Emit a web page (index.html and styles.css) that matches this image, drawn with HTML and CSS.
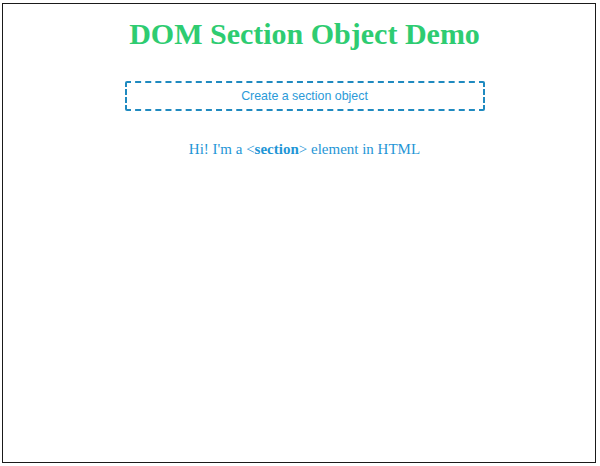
FILE: index.html
```html
<!DOCTYPE html>
<html>
<head>
<meta charset="utf-8">
<link rel="stylesheet" href="styles.css">
</head>
<body>
<div class="frame">
  <h1 class="title">DOM Section Object Demo</h1>
  <button class="btn">Create a section object</button>
  <section class="msg">Hi! I'm a &lt;<b>section</b>&gt; element in HTML</section>
</div>
</body>
</html>
```
FILE: styles.css
```css
html, body { margin: 0; padding: 0; background: #fff; }
.frame {
  margin: 3px 0 0 2px;
  padding-left: 11px;
  width: 594px;
  height: 460px;
  border: 1px solid #1a1a1a;
  display: flex;
  flex-direction: column;
  align-items: center;
  box-sizing: border-box;
}
.title {
  margin: 15px 0 0 0;
  font-family: "Liberation Serif", serif;
  font-weight: bold;
  font-size: 30px;
  line-height: 30px;
  color: #2ecc71;
}
.btn {
  margin-top: 32px;
  width: 360px;
  height: 30px;
  background: #fff;
  border: 2px dashed #1f8ac0;
  border-radius: 2px;
  font-family: "Liberation Sans", sans-serif;
  font-size: 12.4px;
  color: #2a9ad8;
  padding: 0;
}
.msg {
  margin-top: 29px;
  font-family: "Liberation Serif", serif;
  font-size: 15px;
  line-height: 18px;
  color: #1f96d6;
}
.msg b { font-weight: bold; }
```
